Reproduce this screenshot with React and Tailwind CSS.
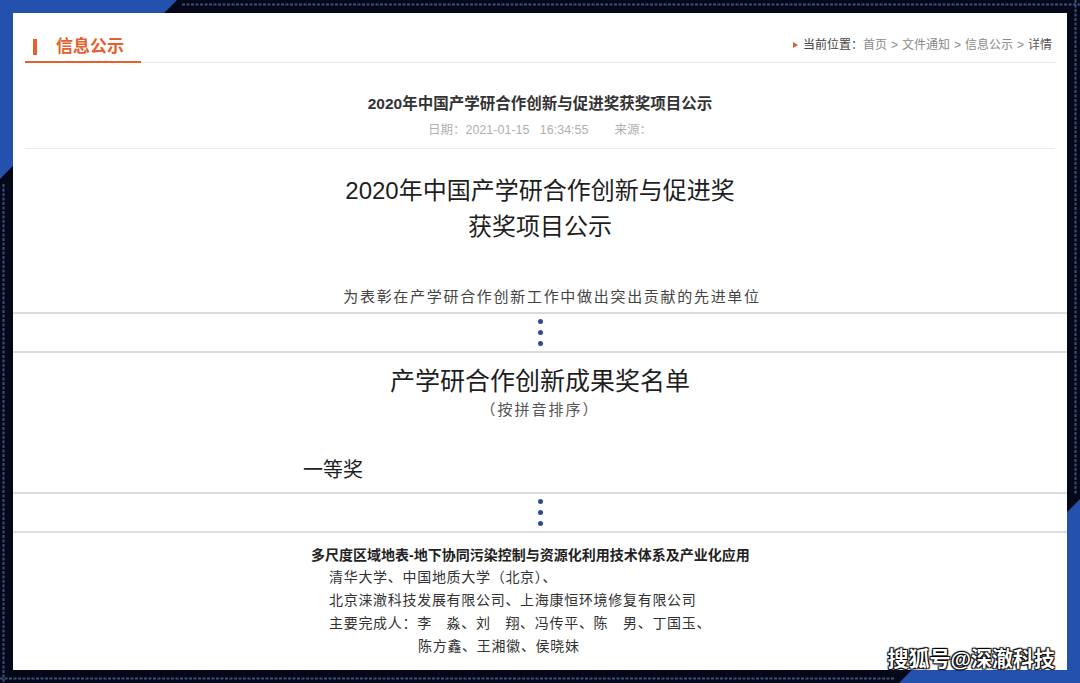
import React from 'react';

const sans = "font-['Liberation_Sans','Noto_Sans_CJK_SC',sans-serif]";

const Dots = () => (
  <div className="flex h-[37px] flex-col items-center justify-center gap-[6px]">
    <span className="h-[5px] w-[5px] rounded-full bg-[#2d4b91]" />
    <span className="h-[5px] w-[5px] rounded-full bg-[#2d4b91]" />
    <span className="h-[5px] w-[5px] rounded-full bg-[#2d4b91]" />
  </div>
);

// background frame: dark navy with blue corners and dotted rails
const Frame = () => (
  <svg className="absolute inset-0" width="1080" height="683" viewBox="0 0 1080 683">
    <rect width="1080" height="683" fill="#050818" />
    <polygon points="0,0 177,0 0,179" fill="#2351ad" />
    <polygon points="1080,683 899,683 1080,499" fill="#2351ad" />
    <line x1="182" y1="4.5" x2="1080" y2="4.5" stroke="#3d4f82" strokeWidth="2" strokeDasharray="3 1.5" />
    <line x1="3.5" y1="184" x2="3.5" y2="683" stroke="#3d4f82" strokeWidth="2" strokeDasharray="3 1.5" />
    <line x1="0" y1="678.5" x2="895" y2="678.5" stroke="#3d4f82" strokeWidth="2" strokeDasharray="3 1.5" />
    <line x1="1075.5" y1="0" x2="1075.5" y2="495" stroke="#3d4f82" strokeWidth="2" strokeDasharray="3 1.5" />
  </svg>
);

const Sep = () => <span className="px-[4px]">&gt;</span>;

export default function App() {
  return (
    <div className={`relative h-[683px] w-[1080px] overflow-hidden p-[13px] ${sans}`}>
      <Frame />
      <div className="relative flex h-full flex-col bg-white">
        {/* website header part */}
        <div className="flex h-[299px] flex-col">
          <div className="mx-[12px] flex items-end border-b border-[#e6e6e6]">
            <div className="-mb-px flex w-[116px] items-center gap-[19px] border-b-2 border-[#e4602c] pb-[6px] pl-[8px] pt-[25px]">
              <span className="h-[16px] w-[4px] bg-[#e4602c]" />
              <span className="text-[17px] font-bold leading-[17px] text-[#e4602c]">信息公示</span>
            </div>
            <div className="ml-auto mr-[3px] flex items-center pb-[9px] text-[12px] leading-[16px]">
              <span className="mr-[5px] h-0 w-0 border-y-[3px] border-l-[5px] border-y-transparent border-l-[#e0583a]" />
              <span className="text-[#444]">当前位置：</span>
              <span className="text-[#8a8a8a]">首页<Sep />文件通知<Sep />信息公示<Sep /></span>
              <span className="text-[#555]">详情</span>
            </div>
          </div>
          <div className="mx-[12px] flex flex-col items-center border-b border-[#ececec] pb-[10px]">
            <div className="mt-[31px] text-[15.5px] font-bold leading-[20px] text-[#333]">2020年中国产学研合作创新与促进奖获奖项目公示</div>
            <div className="mt-[8px] flex gap-[26px] text-[12.5px] leading-[16px] text-[#b0b0b0]">
              <span>日期：2021-01-15&nbsp;&nbsp;&nbsp;16:34:55</span>
              <span>来源：</span>
            </div>
          </div>
          <div className="flex flex-col items-center pt-[24px] text-[24px] leading-[36px] text-[#1e1e1e]">
            <div>2020年中国产学研合作创新与促进奖</div>
            <div>获奖项目公示</div>
          </div>
          <div className="mt-[42px] pl-[24px] text-center text-[15px] leading-[20px] tracking-[1.7px] text-[#444]">
            为表彰在产学研合作创新工作中做出突出贡献的先进单位
          </div>
        </div>

        <div className="h-[2px] bg-[#dcdcdc]" />
        <Dots />
        <div className="h-[2px] bg-[#dcdcdc]" />

        {/* list heading */}
        <div className="flex h-[139px] flex-col">
          <div className="pt-[12px] text-center text-[25px] leading-[32px] text-[#1e1e1e]">产学研合作创新成果奖名单</div>
          <div className="mt-[3px] text-center text-[15px] leading-[20px] tracking-[2px] text-[#555]">（按拼音排序）</div>
          <div className="mt-[36px] pl-[290px] text-[20px] leading-[28px] text-[#1e1e1e]">一等奖</div>
        </div>

        <div className="h-[2px] bg-[#dcdcdc]" />
        <Dots />
        <div className="h-[2px] bg-[#dcdcdc]" />

        {/* award entry */}
        <div className="flex flex-1 flex-col pt-[11px] text-[14px] text-[#222]">
          <div className="pl-[298px] font-bold leading-[22px]">多尺度区域地表-地下协同污染控制与资源化利用技术体系及产业化应用</div>
          <div className="pl-[316px] leading-[23px] tracking-[0.7px] text-[#333]">
            <div>清华大学、中国地质大学（北京）、</div>
            <div>北京涞澈科技发展有限公司、上海康恒环境修复有限公司</div>
            <div>主要完成人：李　淼、刘　翔、冯传平、陈　男、丁国玉、</div>
            <div className="pl-[89px]">陈方鑫、王湘徽、侯晓妹</div>
          </div>
        </div>
      </div>
      <div className="absolute bottom-[12px] right-[25px] text-[21px] font-bold leading-[24px] text-white [text-shadow:1px_1px_1px_#000,-1px_-1px_1px_#000,1px_-1px_1px_#000,-1px_1px_1px_#000]">
        搜狐号@深澈科技
      </div>
    </div>
  );
}
